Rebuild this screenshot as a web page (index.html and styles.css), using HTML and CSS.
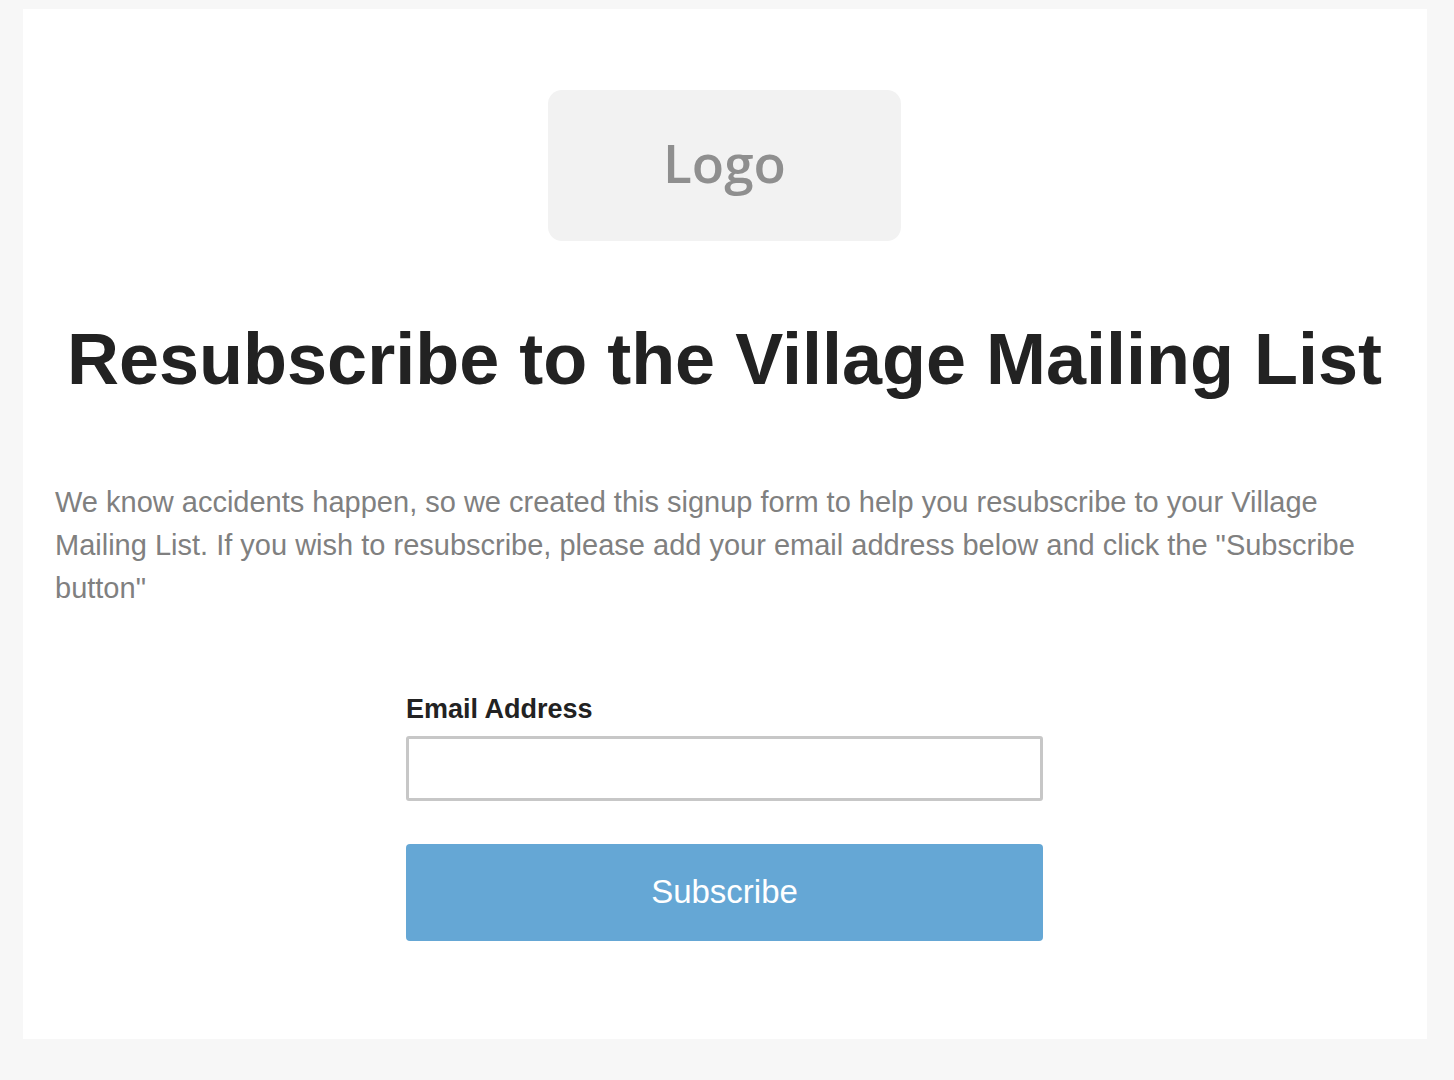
FILE: index.html
```html
<!DOCTYPE html>
<html lang="en">
<head>
  <meta charset="utf-8">
  <meta name="viewport" content="width=device-width, initial-scale=1">
  <title>Resubscribe to the Village Mailing List</title>
  <link rel="stylesheet" href="styles.css">
</head>
<body>
  <main class="card">
    <div class="logo">Logo</div>
    <h1 class="title">Resubscribe to the Village Mailing List</h1>
    <p class="intro">We know accidents happen, so we created this signup form to help you resubscribe to your Village Mailing List. If you wish to resubscribe, please add your email address below and click the "Subscribe button"</p>
    <form class="form">
      <label class="label" for="email">Email Address</label>
      <input class="input" type="email" id="email" name="email">
      <button class="button" type="submit">Subscribe</button>
    </form>
  </main>
</body>
</html>
```

FILE: styles.css
```css
* {
  box-sizing: border-box;
}

body {
  margin: 0;
  padding: 9px 27px 41px 23px;
  background: #f7f7f7;
  color: #222;
  font-family: "Liberation Sans", Arial, sans-serif;
}

.card {
  display: flex;
  flex-direction: column;
  padding: 81px 33px 98px 32px;
  background: #fff;
}

.logo {
  display: flex;
  align-items: center;
  justify-content: center;
  align-self: center;
  width: 353px;
  height: 151px;
  padding-bottom: 6px;
  border-radius: 14px;
  background: #f2f2f2;
  color: #8f8f8f;
  font: 600 53px/1 "Open Sans", sans-serif;
}

.title {
  margin: 73px 0 0;
  font-size: 72px;
  line-height: 90px;
  text-align: center;
}

.intro {
  margin: 77px 0 0;
  color: #808080;
  font-size: 29px;
  line-height: 43px;
}

.form {
  display: flex;
  flex-direction: column;
  align-self: center;
  width: 100%;
  max-width: 637px;
  margin-top: 83px;
}

.label {
  font-size: 27px;
  font-weight: bold;
  line-height: 32px;
}

.input {
  height: 65px;
  margin-top: 11px;
  padding: 0 16px;
  border: 3px solid #c7c7c7;
  border-radius: 3px;
  background: #fff;
  font: 29px "Liberation Sans", Arial, sans-serif;
}

.button {
  height: 97px;
  margin-top: 43px;
  padding: 0 0 2px;
  border: 0;
  border-radius: 4px;
  background: #65a7d5;
  color: #fff;
  font: 33px "Liberation Sans", Arial, sans-serif;
  cursor: pointer;
}
```
